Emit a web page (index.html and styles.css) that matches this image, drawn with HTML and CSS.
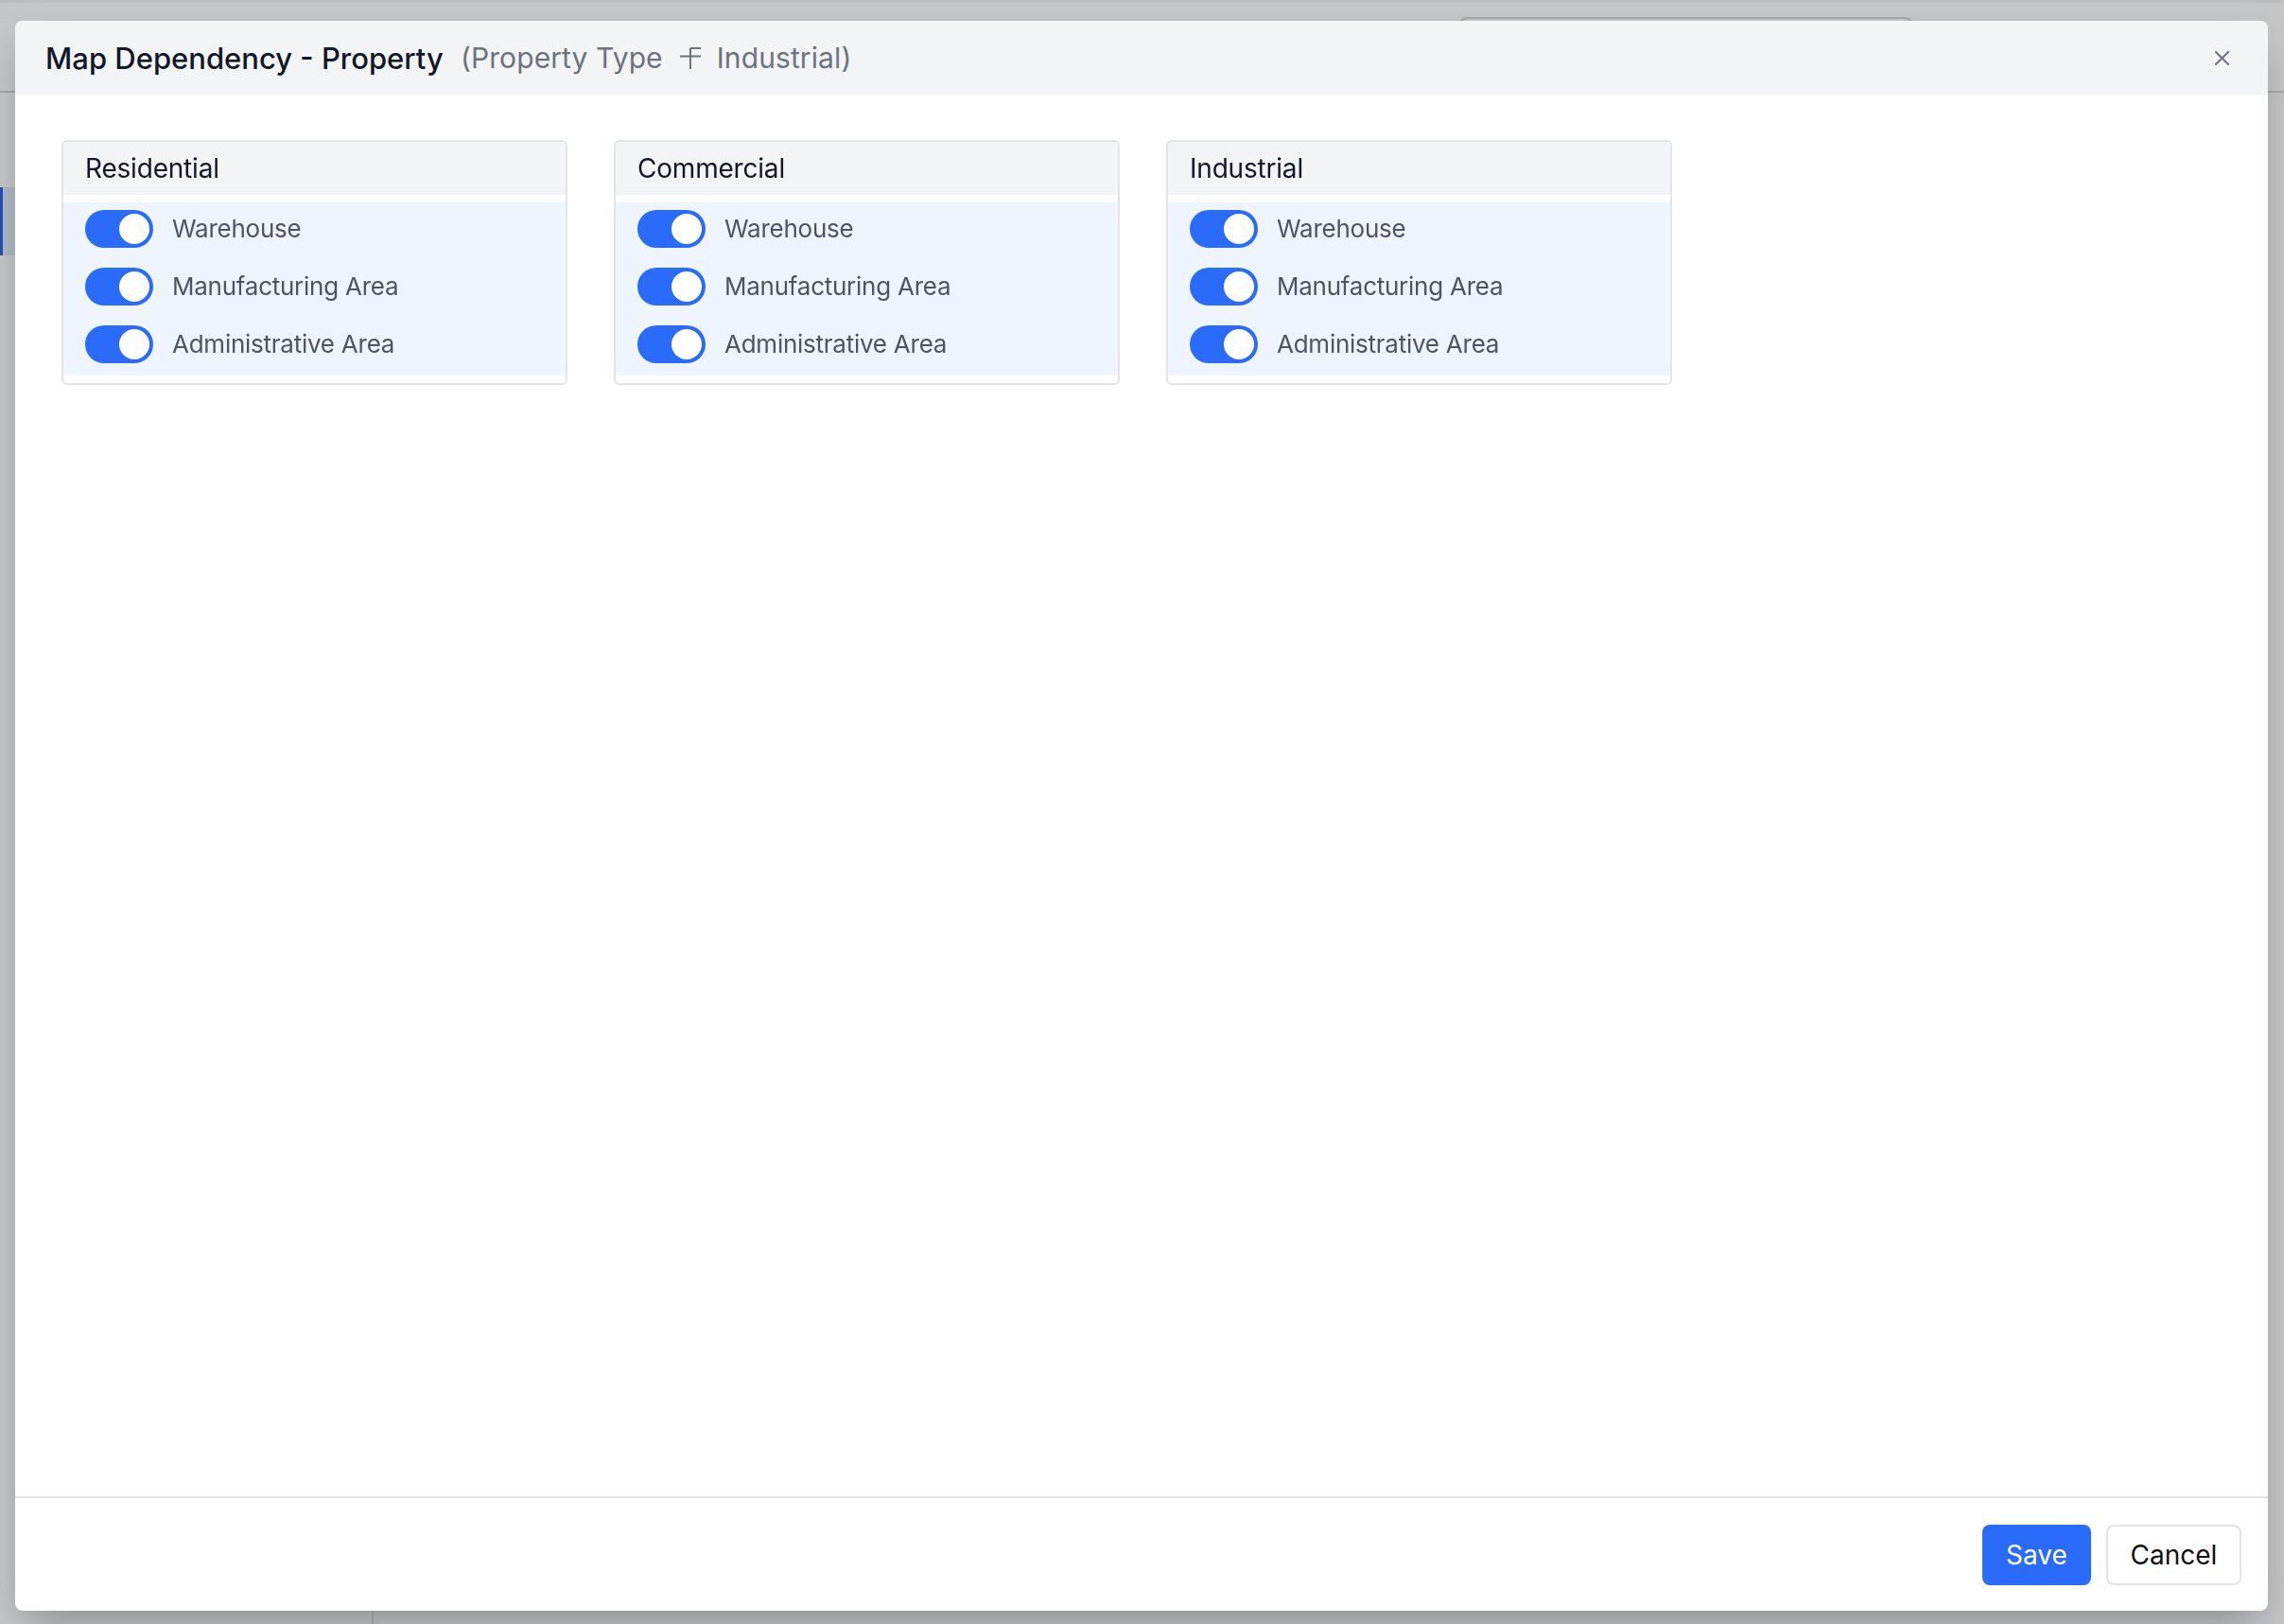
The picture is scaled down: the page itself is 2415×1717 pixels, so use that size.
FILE: index.html
```html
<!DOCTYPE html>
<html lang="en">
<head>
<meta charset="utf-8">
<title>Map Dependency - Property</title>
<link rel="stylesheet" href="styles.css">
</head>
<body>
<div class="page">
  <header class="page-header">
    <div class="search-box"></div>
  </header>
  <div class="page-main">
    <aside class="sidebar">
      <div class="nav-item active"></div>
    </aside>
    <main class="content"></main>
  </div>
</div>

<div class="overlay"></div>

<div class="modal" role="dialog" aria-labelledby="modal-title">
  <div class="modal-header">
    <h1 class="modal-title" id="modal-title">Map Dependency - Property</h1>
    <span class="modal-subtitle">(Property Type
      <svg class="dep-icon" viewBox="0 0 22 24" aria-hidden="true">
        <path d="M0 9.5H22M11 1V23M11 1H22" fill="none" stroke="currentColor" stroke-width="2"/>
      </svg>
      Industrial)</span>
    <button class="modal-close" aria-label="Close">
      <svg viewBox="0 0 18 16" aria-hidden="true">
        <path d="M2 1L16 15M16 1L2 15" fill="none" stroke="currentColor" stroke-width="2.2" stroke-linecap="round"/>
      </svg>
    </button>
  </div>

  <div class="modal-body">
    <section class="dep-card">
      <div class="dep-card-header">Residential</div>
      <div class="dep-card-body">
        <ul class="dep-list">
          <li class="dep-row"><span class="toggle on"><span class="knob"></span></span><span class="dep-label">Warehouse</span></li>
          <li class="dep-row"><span class="toggle on"><span class="knob"></span></span><span class="dep-label">Manufacturing Area</span></li>
          <li class="dep-row"><span class="toggle on"><span class="knob"></span></span><span class="dep-label">Administrative Area</span></li>
        </ul>
      </div>
    </section>
    <section class="dep-card">
      <div class="dep-card-header">Commercial</div>
      <div class="dep-card-body">
        <ul class="dep-list">
          <li class="dep-row"><span class="toggle on"><span class="knob"></span></span><span class="dep-label">Warehouse</span></li>
          <li class="dep-row"><span class="toggle on"><span class="knob"></span></span><span class="dep-label">Manufacturing Area</span></li>
          <li class="dep-row"><span class="toggle on"><span class="knob"></span></span><span class="dep-label">Administrative Area</span></li>
        </ul>
      </div>
    </section>
    <section class="dep-card">
      <div class="dep-card-header">Industrial</div>
      <div class="dep-card-body">
        <ul class="dep-list">
          <li class="dep-row"><span class="toggle on"><span class="knob"></span></span><span class="dep-label">Warehouse</span></li>
          <li class="dep-row"><span class="toggle on"><span class="knob"></span></span><span class="dep-label">Manufacturing Area</span></li>
          <li class="dep-row"><span class="toggle on"><span class="knob"></span></span><span class="dep-label">Administrative Area</span></li>
        </ul>
      </div>
    </section>
  </div>

  <div class="modal-footer">
    <button class="btn btn-primary">Save</button>
    <button class="btn btn-secondary">Cancel</button>
  </div>
</div>
</body>
</html>
```

FILE: styles.css
```css
* { box-sizing: border-box; }

html, body {
  margin: 0;
  padding: 0;
  width: 2415px;
  height: 1717px;
  overflow: hidden;
  font-family: "Inter", "Noto Sans", "Liberation Sans", sans-serif;
  background: #ffffff;
}

/* ---------- underlying page ---------- */
.page {
  width: 2415px;
  height: 1717px;
  display: flex;
  flex-direction: column;
  border-top: 3px solid #f4f4f6;
}

.page-header {
  height: 95px;
  border-bottom: 2px solid #d9dadd;
  display: flex;
  align-items: flex-start;
  padding: 15px 0 0 1540px;
}

.search-box {
  width: 485px;
  height: 62px;
  border: 2px solid #d4d5d9;
  border-radius: 12px;
}

.page-main {
  flex: 1;
  display: flex;
}

.sidebar {
  width: 395px;
  border-right: 2px solid #e3e4e7;
  padding-top: 100px;
}

.nav-item {
  height: 72px;
}

.nav-item.active {
  background: #e4ecfb;
  border-left: 3px solid #2563eb;
}

.content { flex: 1; }

/* ---------- overlay ---------- */
.overlay {
  position: fixed;
  inset: 0;
  background: rgba(30, 34, 48, 0.26);
}

/* ---------- modal ---------- */
.modal {
  position: fixed;
  left: 16px;
  top: 22px;
  width: 2382px;
  height: 1681px;
  background: #ffffff;
  border-radius: 8px;
  overflow: hidden;
  display: flex;
  flex-direction: column;
  box-shadow: 0 22px 44px -10px rgba(0, 0, 0, 0.3);
}

.modal-header {
  height: 78px;
  flex: none;
  background: #f3f4f6;
  display: flex;
  align-items: center;
  padding: 0 36px 0 32px;
}

.modal-title {
  margin: 0;
  font-size: 31px;
  font-weight: 500;
  color: #111827;
  letter-spacing: 0;
}

.modal-subtitle {
  margin-left: 18px;
  font-size: 30px;
  font-weight: 400;
  color: #6b7280;
  display: flex;
  align-items: center;
  letter-spacing: 0.1px;
}

.dep-icon {
  width: 22px;
  height: 24px;
  margin: 0 17px 0 18px;
  color: #6b7280;
  position: relative;
  top: 1px;
}

.modal-close {
  margin-left: auto;
  width: 26px;
  height: 26px;
  padding: 0;
  border: none;
  background: transparent;
  color: #6b7280;
  display: flex;
  align-items: center;
  justify-content: center;
}

.modal-close svg {
  width: 17px;
  height: 15px;
}

/* ---------- body ---------- */
.modal-body {
  flex: 1;
  display: flex;
  align-items: flex-start;
  gap: 49px;
  padding: 48px 49px;
}

.dep-card {
  width: 535px;
  border: 2px solid #e3e4e8;
  border-radius: 6px;
  overflow: hidden;
  background: #ffffff;
}

.dep-card-header {
  height: 56px;
  background: #f3f4f6;
  padding: 0 23px;
  display: flex;
  align-items: center;
  font-size: 28px;
  font-weight: 400;
  color: #111827;
  letter-spacing: -0.2px;
}

.dep-card-body {
  padding: 8px 0;
}

.dep-list {
  list-style: none;
  margin: 0;
  padding: 8px 23px 13px;
  background: #eff5ff;
  display: flex;
  flex-direction: column;
  gap: 21px;
}

.dep-row {
  height: 40px;
  display: flex;
  align-items: center;
  gap: 20px;
}

.toggle {
  width: 72px;
  height: 40px;
  border-radius: 20px;
  background: #d1d5db;
  display: flex;
  align-items: center;
  padding: 4px;
  flex: none;
}

.toggle.on {
  background: #2a6bf9;
  justify-content: flex-end;
}

.knob {
  width: 32px;
  height: 32px;
  border-radius: 50%;
  background: #ffffff;
}

.dep-label {
  font-size: 26px;
  color: #4b5563;
  letter-spacing: -0.25px;
  position: relative;
  top: -1px;
}

/* ---------- footer ---------- */
.modal-footer {
  flex: none;
  height: 121px;
  border-top: 2px solid #e3e4e8;
  display: flex;
  justify-content: flex-end;
  align-items: center;
  gap: 16px;
  padding: 0 28px;
}

.btn {
  height: 64px;
  border-radius: 8px;
  font-family: inherit;
  font-size: 28px;
  padding: 0;
  display: flex;
  align-items: center;
  justify-content: center;
}

.btn-primary {
  width: 115px;
  background: #2a6bf9;
  border: none;
  color: #ffffff;
}

.btn-secondary {
  width: 143px;
  background: #ffffff;
  border: 2px solid #e3e4e8;
  color: #111111;
}
```
